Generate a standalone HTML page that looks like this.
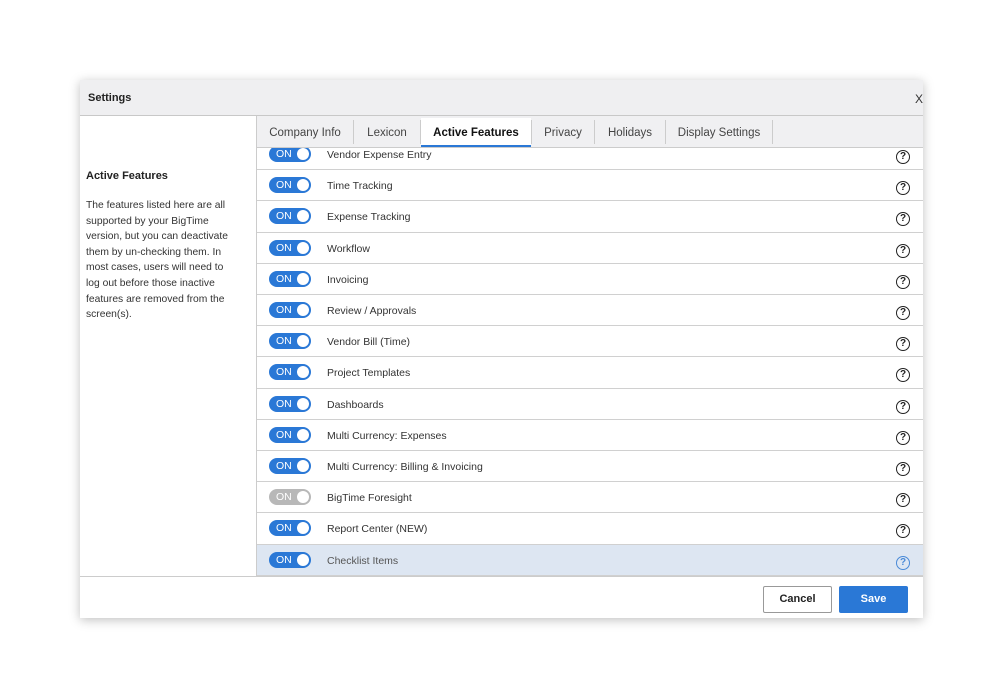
<!DOCTYPE html>
<html><head><meta charset="utf-8"><style>
body{margin:0;width:1003px;height:699px;background:#fff;font-family:"Liberation Sans",sans-serif;position:relative;overflow:hidden}
.dlg{position:absolute;left:80px;top:80px;width:843px;height:538px;background:#fff;box-shadow:0 2px 10px rgba(0,0,0,.25);overflow:hidden}
.hdr{position:absolute;left:0;top:0;right:0;height:35px;background:#efeff1;border-bottom:1px solid #c8c8c8}
.hdr b{position:absolute;left:8px;top:12px;font-size:11px;color:#222}
.hdr .x{position:absolute;right:0;top:12px;font-size:12px;color:#333}
.left{position:absolute;left:0;top:36px;width:176px;height:460px;border-right:1px solid #ccc}
.left h4{margin:0;position:absolute;left:6px;top:54px;font-size:11px;color:#222}
.left p{margin:0;position:absolute;left:6px;top:82px;width:152px;font-size:10.3px;line-height:15.6px;color:#333}
.tabs{position:absolute;left:177px;top:36px;right:0;height:31px;background:#f0f0f2;border-bottom:1px solid #ccc;z-index:2}
.tab{position:absolute;top:2px;height:29px;line-height:31px;font-size:11.5px;color:#444;text-align:center}
.sep{position:absolute;top:4px;height:24px;width:1px;background:#ccc}
.tab.act{background:#fff;color:#111;font-weight:bold;border-bottom:2px solid #2a78d6;height:27px}
.list{position:absolute;left:177px;top:67px;right:0;height:429px;overflow:hidden}
.row{position:absolute;left:0;right:0;height:30.2px;border-bottom:1px solid #d0d0d0}
.tg{position:absolute;left:12px;top:7px;width:42px;height:16px;border-radius:8px;background:#2a78d6}
.tg span{position:absolute;left:7px;top:2px;font-size:10.5px;color:#fff}
.tg i{position:absolute;right:2px;top:2px;width:12px;height:12px;border-radius:50%;background:#fff}
.tg.off{background:#b8b8b8}
.lbl{position:absolute;left:70px;top:10px;font-size:10.5px;color:#333}
.q{position:absolute;right:13px;top:11px;width:12px;height:12px;border:1.8px solid #222;border-radius:50%;font-size:10px;font-weight:bold;text-align:center;line-height:12px;color:#222}
.foot{position:absolute;left:0;right:0;top:496px;height:42px;border-top:1px solid #ccc;background:#fff}
.btn{position:absolute;top:9px;height:25px;line-height:25px;text-align:center;font-size:11px;font-weight:bold;border-radius:2px}
</style></head><body>
<div class="dlg">
<div class="hdr"><b>Settings</b><span class="x">X</span></div>
<div class="left"><h4>Active Features</h4><p>The features listed here are all supported by your BigTime version, but you can deactivate them by un-checking them. In most cases, users will need to log out before those inactive features are removed from the screen(s).</p></div>
<div class="tabs">
<div class="tab" style="left:0;width:96px">Company Info</div><div class="sep" style="left:96px"></div>
<div class="tab" style="left:97px;width:66px">Lexicon</div><div class="sep" style="left:163px"></div>
<div class="tab act" style="left:164px;width:110px">Active Features</div><div class="sep" style="left:274px"></div>
<div class="tab" style="left:275px;width:62px">Privacy</div><div class="sep" style="left:337px"></div>
<div class="tab" style="left:338px;width:70px">Holidays</div><div class="sep" style="left:408px"></div>
<div class="tab" style="left:409px;width:106px">Display Settings</div><div class="sep" style="left:515px"></div>
</div>
<div class="list">
<div class="row" style="top:-8px"><div class="tg"><span>ON</span><i></i></div><div class="lbl">Vendor Expense Entry</div><div class="q">?</div></div>
<div class="row" style="top:23.2px"><div class="tg"><span>ON</span><i></i></div><div class="lbl">Time Tracking</div><div class="q">?</div></div>
<div class="row" style="top:54.4px"><div class="tg"><span>ON</span><i></i></div><div class="lbl">Expense Tracking</div><div class="q">?</div></div>
<div class="row" style="top:85.6px"><div class="tg"><span>ON</span><i></i></div><div class="lbl">Workflow</div><div class="q">?</div></div>
<div class="row" style="top:116.8px"><div class="tg"><span>ON</span><i></i></div><div class="lbl">Invoicing</div><div class="q">?</div></div>
<div class="row" style="top:148px"><div class="tg"><span>ON</span><i></i></div><div class="lbl">Review / Approvals</div><div class="q">?</div></div>
<div class="row" style="top:179.2px"><div class="tg"><span>ON</span><i></i></div><div class="lbl">Vendor Bill (Time)</div><div class="q">?</div></div>
<div class="row" style="top:210.4px"><div class="tg"><span>ON</span><i></i></div><div class="lbl">Project Templates</div><div class="q">?</div></div>
<div class="row" style="top:241.6px"><div class="tg"><span>ON</span><i></i></div><div class="lbl">Dashboards</div><div class="q">?</div></div>
<div class="row" style="top:272.8px"><div class="tg"><span>ON</span><i></i></div><div class="lbl">Multi Currency: Expenses</div><div class="q">?</div></div>
<div class="row" style="top:304px"><div class="tg"><span>ON</span><i></i></div><div class="lbl">Multi Currency: Billing &amp; Invoicing</div><div class="q">?</div></div>
<div class="row" style="top:335.2px"><div class="tg off"><span>ON</span><i></i></div><div class="lbl">BigTime Foresight</div><div class="q">?</div></div>
<div class="row" style="top:366.4px"><div class="tg"><span>ON</span><i></i></div><div class="lbl">Report Center (NEW)</div><div class="q">?</div></div>
<div class="row" style="top:397.6px;background:#dde6f2"><div class="tg"><span>ON</span><i></i></div><div class="lbl" style="color:#555">Checklist Items</div><div class="q" style="border-color:#4a8ad8;color:#4a8ad8">?</div></div>
</div>
<div class="foot">
<div class="btn" style="left:683px;width:67px;border:1px solid #999;color:#222;background:#fff">Cancel</div>
<div class="btn" style="left:759px;width:69px;background:#2a78d6;color:#fff;height:27px;line-height:27px">Save</div>
</div>
</div>
</body></html>
